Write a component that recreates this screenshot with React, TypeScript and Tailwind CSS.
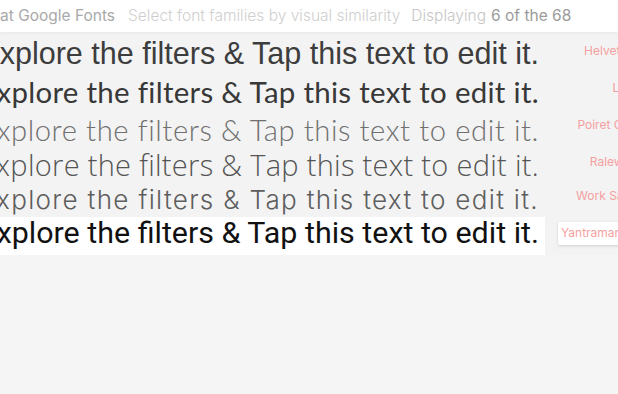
import React, { useLayoutEffect, useRef, useState } from "react";

const SAMPLE = "Explore the filters & Tap this text to edit it.";

type Row = {
  label: string;
  font: string;
  weight: number;
  color: string;
  tracking: string;
  h: string;
  pb: string;
  lpb: string;
  selected?: boolean;
};

const rows: Row[] = [
  { label: "Helvetica", font: "'Liberation Sans', Arial, sans-serif", weight: 400, color: "#3d3d3d", tracking: "0em", h: "h-[39px]", pb: "pb-[3px]", lpb: "pb-[4px]" },
  { label: "Lato", font: "Lato, sans-serif", weight: 400, color: "#383838", tracking: "0.01em", h: "h-[38px]", pb: "pb-[4px]", lpb: "pb-[6px]" },
  { label: "Poiret One", font: "Lato, sans-serif", weight: 300, color: "#707070", tracking: "0.02em", h: "h-[37px]", pb: "pb-[3px]", lpb: "pb-[8px]" },
  { label: "Raleway", font: "'Open Sans', sans-serif", weight: 300, color: "#555555", tracking: "0.01em", h: "h-[35px]", pb: "pb-[2px]", lpb: "pb-[5px]" },
  { label: "Work Sans", font: "Inter, sans-serif", weight: 300, color: "#5e5e5e", tracking: "0.05em", h: "h-[35px]", pb: "pb-[4px]", lpb: "pb-[8px]" },
  { label: "Yantramanav", font: "Roboto, sans-serif", weight: 400, color: "#111111", tracking: "0em", h: "h-[38px]", pb: "pb-[7px]", lpb: "pb-[6px]", selected: true },
];

const TARGET = 560;

function FitText({ row }: { row: Row }) {
  const ref = useRef<HTMLSpanElement>(null);
  const [size, setSize] = useState(30);
  useLayoutEffect(() => {
    const el = ref.current;
    if (!el) return;
    const measure = () => {
      el.style.fontSize = "100px";
      const w = el.getBoundingClientRect().width;
      if (w > 0) {
        const s = (100 * TARGET) / w;
        el.style.fontSize = s + "px";
        setSize(s);
      }
    };
    measure();
    if ((document as any).fonts?.ready) {
      (document as any).fonts.ready.then(measure);
    }
  }, [row.font, row.weight]);
  return (
    <span
      ref={ref}
      className="shrink-0 whitespace-nowrap leading-none"
      style={{
        fontFamily: row.font,
        fontWeight: row.weight,
        color: row.color,
        letterSpacing: row.tracking,
        fontSize: size,
      }}
    >
      {SAMPLE}
    </span>
  );
}

export default function App() {
  return (
    <div className="w-[618px] h-[394px] overflow-hidden bg-[#f5f5f5] font-['Inter',sans-serif]">
      <header className="h-[32px] bg-white shadow-[0_1px_3px_rgba(0,0,0,0.06)] flex items-center whitespace-nowrap text-[15.5px] relative z-10">
        <span className="text-[#a9a9a9]">at Google Fonts</span>
        <span className="ml-[13px] text-[#cfcfcf] font-light">Select font families by visual similarity</span>
        <span className="ml-[11px] text-[#c6c6c6] font-light">Displaying</span>
        <span className="ml-[5px] text-[#9b9b9b]">6 of the 68</span>
      </header>
      <div className="mt-[1px] flex flex-col bg-[#f3f3f3]">
        {rows.map((row) => (
          <div key={row.label} className={`flex ${row.h}`}>
            <div
              className={`w-[545px] shrink-0 overflow-hidden flex justify-end items-end pr-[6px] ${row.pb} ${row.selected ? "bg-white" : ""}`}
            >
              <FitText row={row} />
            </div>
            <div className={`ml-[13px] w-[80px] shrink-0 flex items-center ${row.lpb}`}>
              <div
                className={`w-full text-right text-[12px] text-[#f4a0a0] whitespace-nowrap ${
                  row.selected
                    ? "bg-white h-[23px] flex items-center justify-end pr-[3px] shadow-[0_1px_3px_rgba(0,0,0,0.15)] rounded-[2px]"
                    : "pr-[1px]"
                }`}
              >
                {row.label}
              </div>
            </div>
          </div>
        ))}
      </div>
    </div>
  );
}
